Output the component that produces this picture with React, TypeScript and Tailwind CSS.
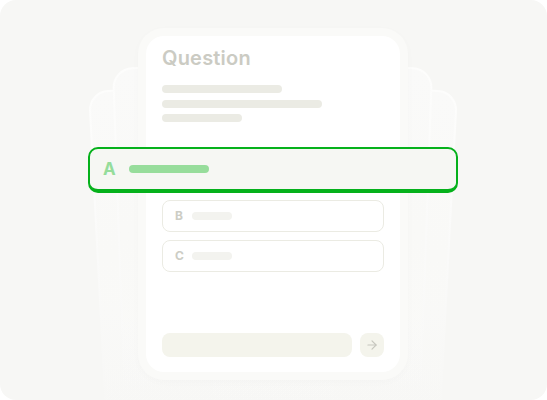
import { ArrowRight } from 'lucide-react';

const LINES = ['w-[120px]', 'w-[160px]', 'w-[80px]'];

function BackCard({ side, className }: { side: 'left' | 'right'; className: string }) {
  return (
    <div
      className={`absolute w-[230px] h-[330px] rounded-[20px] p-[2px] bg-gradient-to-b from-[#fdfdfc] via-[#fafaf9] to-[#f7f7f5]/0 ${
        side === 'left' ? 'origin-top-left' : 'origin-top-right'
      } ${className}`}
    >
      <div className="h-full rounded-[18px] bg-gradient-to-b from-[#fafaf9] via-[#f9f9f7] to-[#f7f7f5]/0" />
    </div>
  );
}

function Option({ letter }: { letter: string }) {
  return (
    <div className="h-8 rounded-lg border border-[#ebebe3] bg-white flex items-center pl-3 gap-[6px]">
      <span className="text-[12px] font-bold text-[#cdcdc5] leading-none w-[11px]">{letter}</span>
      <div className="w-10 h-2 rounded-full bg-[#f3f3ef]" />
    </div>
  );
}

export default function App() {
  return (
    <div className="w-[547px] h-[400px] bg-white" style={{ fontFamily: 'Inter, "Noto Sans", sans-serif' }}>
      <div className="relative w-full h-full rounded-2xl bg-[#f7f7f5] overflow-hidden flex pl-[138px] pt-[28px]">
        {/* fanned cards behind */}
        <BackCard side="left" className="left-[88px] top-[91px] -rotate-[3deg]" />
        <BackCard side="left" className="left-[112px] top-[68px] -rotate-[2deg]" />
        <BackCard side="right" className="right-[89px] top-[91px] rotate-[3deg]" />
        <BackCard side="right" className="right-[114px] top-[68px] rotate-[2deg]" />

        {/* main card */}
        <div className="relative z-10 w-[270px] h-[352px] rounded-[26px] bg-[#fafaf8] p-2 shadow-[0_2px_8px_rgba(0,0,0,0.02)]">
          <div className="h-full rounded-[18px] bg-white px-4 pt-2 pb-[15px] flex flex-col">
            <h1 className="text-[20px] leading-7 font-semibold text-[#cbcbc3] tracking-[0.2px]">Question</h1>

            <div className="mt-[13px] flex flex-col">
              <div className={`${LINES[0]} h-2 rounded-full bg-[#ebebe4]`} />
              <div className={`${LINES[1]} h-2 rounded-full bg-[#ebebe4] mt-[7px]`} />
              <div className={`${LINES[2]} h-2 rounded-full bg-[#ebebe4] mt-[6px]`} />
            </div>

            {/* selected answer */}
            <div className="mt-[25px] -mx-[74px] h-[46px] rounded-[10px] border-2 border-b-4 border-[#05b11b] bg-[#f6f7f3] flex items-center pl-[13px] gap-[13px]">
              <span className="text-[17px] font-bold text-[#95dd9b] leading-none">A</span>
              <div className="w-20 h-2 rounded-full bg-[#97dd9b]" />
            </div>

            <div className="mt-[7px]">
              <Option letter="B" />
            </div>
            <div className="mt-2">
              <Option letter="C" />
            </div>

            <div className="mt-auto flex gap-2">
              <div className="flex-1 h-6 rounded-lg bg-[#f4f4ec]" />
              <div className="w-6 h-6 rounded-lg bg-[#f4f4ec] flex items-center justify-center">
                <ArrowRight size={14} strokeWidth={2} className="text-[#c6c6be]" />
              </div>
            </div>
          </div>
        </div>
      </div>
    </div>
  );
}
